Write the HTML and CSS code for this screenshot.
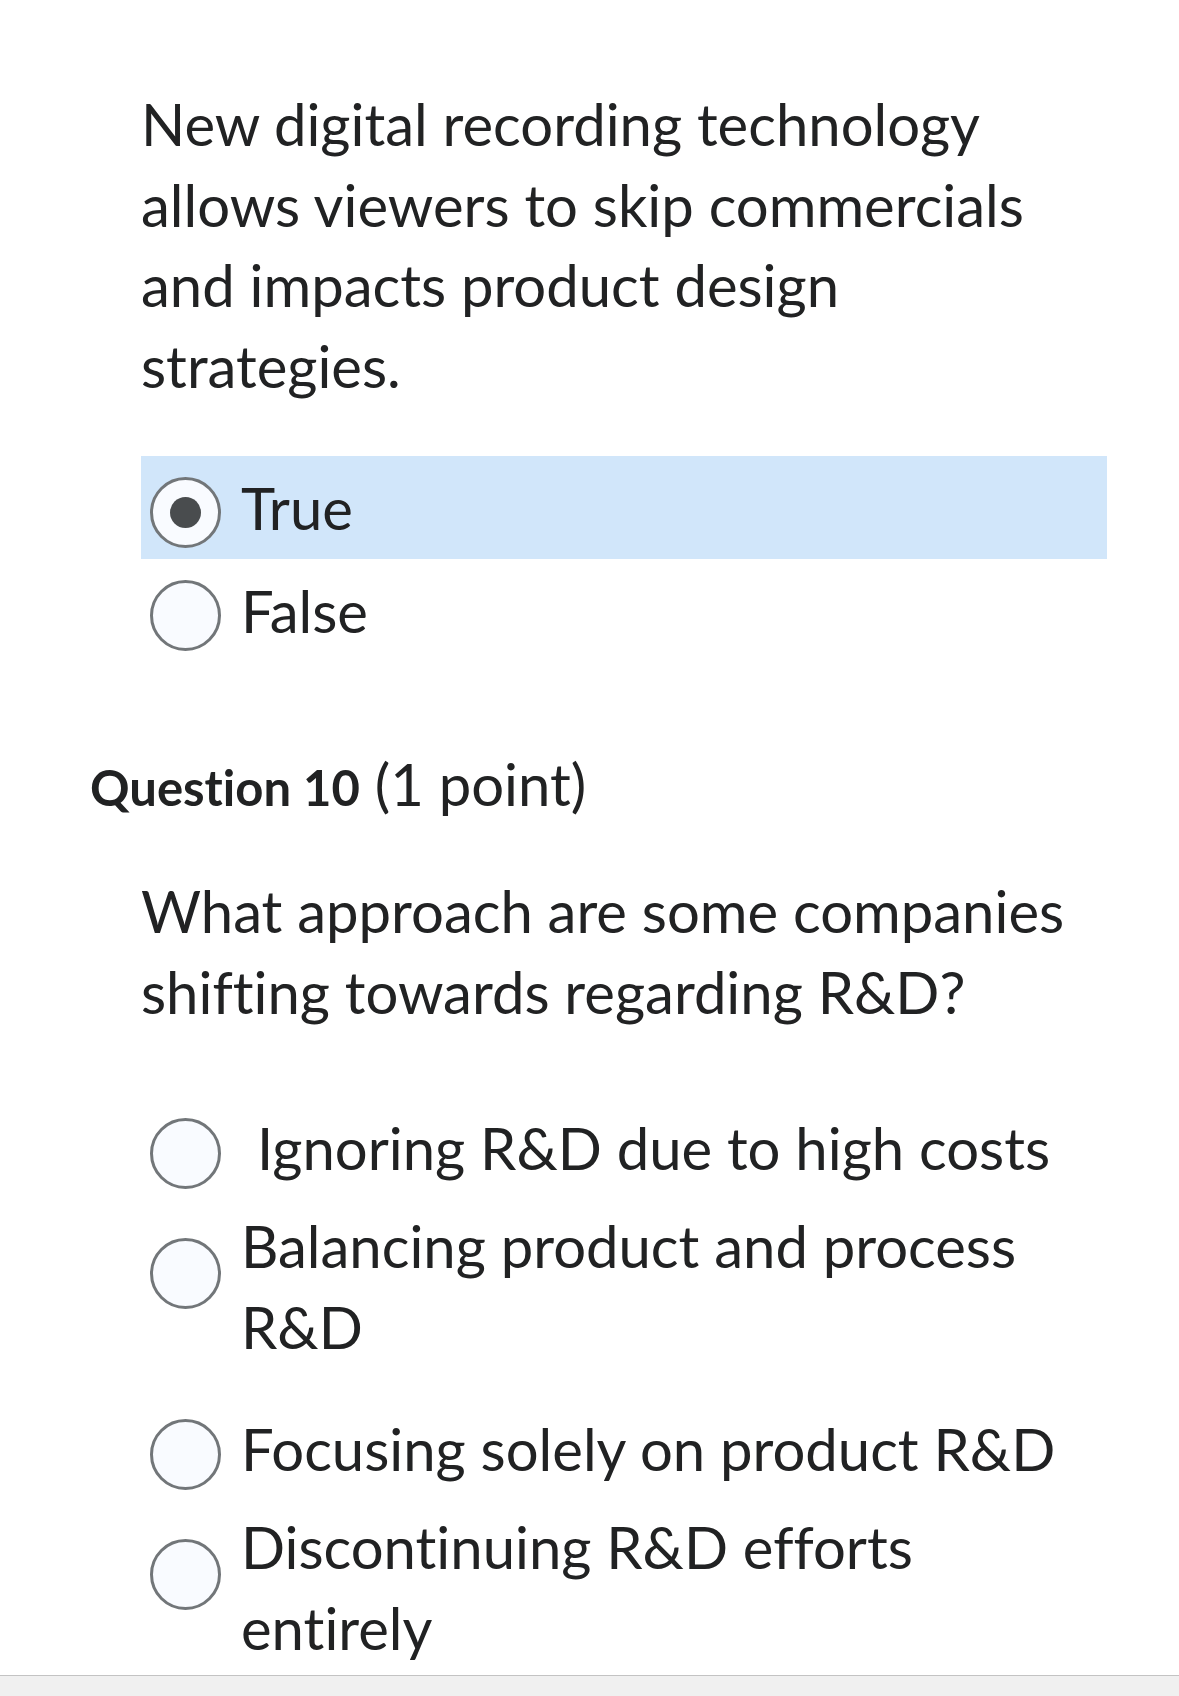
FILE: index.html
```html
<!DOCTYPE html>
<html lang="en">
<head>
<meta charset="utf-8">
<title>Quiz</title>
<link rel="stylesheet" href="styles.css">
</head>
<body>
<main class="page">
  <section class="question q9">
    <p class="prompt">New digital recording technology allows viewers to skip commercials and impacts product design strategies.</p>
    <div class="options tf">
      <label class="opt selected">
        <span class="radio checked"><span class="dot"></span></span>
        <span class="text">True</span>
      </label>
      <label class="opt">
        <span class="radio"></span>
        <span class="text">False</span>
      </label>
    </div>
  </section>

  <section class="question q10">
    <h2 class="qhead"><span class="qnum">Question 10</span> <span class="qpts">(1 point)</span></h2>
    <p class="prompt prompt2">What approach are some companies shifting towards regarding R&amp;D?</p>
    <div class="options mc">
      <label class="opt">
        <span class="radio"></span>
        <span class="text lead">Ignoring R&amp;D due to high costs</span>
      </label>
      <label class="opt multi">
        <span class="radio"></span>
        <span class="text">Balancing product and process R&amp;D</span>
      </label>
      <label class="opt">
        <span class="radio"></span>
        <span class="text">Focusing solely on product R&amp;D</span>
      </label>
      <label class="opt multi">
        <span class="radio"></span>
        <span class="text">Discontinuing R&amp;D efforts entirely</span>
      </label>
    </div>
  </section>
</main>
<div class="bottombar"></div>
</body>
</html>
```

FILE: styles.css
```css
html, body {
  margin: 0;
  padding: 0;
  background: #ffffff;
}

body {
  font-family: Lato, "Open Sans", "Noto Sans", sans-serif;
  color: #212223;
  font-variant-ligatures: no-common-ligatures;
}

.page {
  padding-top: 84px;
  width: 1179px;
}

.prompt {
  margin: 0;
  padding-left: 141px;
  padding-right: 82px;
  font-size: 58px;
  line-height: 80.5px;
  font-weight: 400;
}

.options {
  display: flex;
  flex-direction: column;
}

.tf {
  margin-top: 50px;
}

.opt {
  display: flex;
  align-items: flex-start;
  margin-left: 141px;
  width: 966px;
  padding: 11px 0 11px 9px;
  box-sizing: border-box;
}

.opt.selected {
  background: #d1e6fa;
}

.radio {
  flex: none;
  width: 71px;
  height: 71px;
  box-sizing: border-box;
  border: 3px solid #727679;
  border-radius: 50%;
  background: #f9fbff;
  margin-top: 10px;
  display: flex;
  align-items: center;
  justify-content: center;
}

.dot {
  width: 31px;
  height: 31px;
  border-radius: 50%;
  background: #494c4e;
}

.text {
  margin-left: 20px;
  font-size: 58px;
  line-height: 81px;
}

.text.lead {
  padding-left: 16px;
}

.qhead {
  margin: 92px 0 0 0;
  padding-left: 90px;
  font-size: 58px;
  line-height: 60px;
  font-weight: 400;
}

.qnum {
  font-size: 49px;
  font-weight: 700;
}

.prompt2 {
  margin-top: 54px;
}

.mc {
  margin-top: 75px;
}

.mc .opt {
  padding: 0 0 0 9px;
  margin-bottom: 16px;
}

.mc .opt .radio {
  margin-top: 11px;
}

.mc .opt.multi {
  margin-bottom: 41px;
}

.mc .opt.multi .radio {
  margin-top: 33px;
}

.bottombar {
  position: fixed;
  left: 0;
  right: 0;
  bottom: 0;
  height: 20px;
  border-top: 1px solid #c3c3c3;
  background: #f0f0f0;
}
```
